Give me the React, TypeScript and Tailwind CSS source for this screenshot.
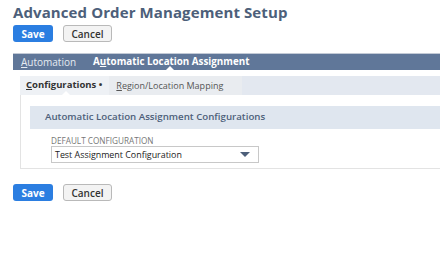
import React from "react";

const font = { fontFamily: '"Open Sans", "Liberation Sans", sans-serif' };

function Buttons() {
  return (
    <div className="flex items-center gap-[10px]">
      <button className="h-[17px] w-[40px] rounded-[3px] bg-[#2b7ee1] text-[10px] font-bold leading-none text-white">
        Save
      </button>
      <button className="h-[17px] w-[49px] rounded-[3px] border border-[#b9b9b9] bg-[#f3f3f3] text-[10px] font-semibold leading-none text-[#333]">
        Cancel
      </button>
    </div>
  );
}

export default function App() {
  return (
    <div className="h-[256px] w-[440px] overflow-hidden bg-white" style={font}>
      <div className="pl-[13px] pt-[1px]">
        <h1 className="text-[15px] font-bold leading-[22px] tracking-[0.1px] text-[#4d5f7a]">
          Advanced Order Management Setup
        </h1>
        <div className="mt-[2px]">
          <Buttons />
        </div>

        <div className="relative mt-[11px] flex h-[17px] items-center border-t border-[#c3cad6] bg-[#607799] pl-[8px] text-[10px] text-white">
          <span className="mr-[17px] text-[#e6ebf2]">
            <span className="underline">A</span>utomation
          </span>
          <span className="text-[9.8px] font-bold">
            A<span className="underline">u</span>tomatic Location Assignment
          </span>
          <span className="absolute bottom-0 left-[153px] h-0 w-0 border-x-[4px] border-b-[4px] border-x-transparent border-b-white" />
        </div>

        <div className="ml-[7px] mt-[6px]">
          <div className="relative flex h-[19px] items-stretch bg-[#e3e8f0] text-[9.5px]">
            <div className="flex items-center bg-[#eef1f5] pl-[6px] pr-[7px] font-bold text-[#333]">
              <span>
                <span className="underline">C</span>onfigurations •
              </span>
            </div>
            <div className="flex items-center bg-[#e9ecf0] pl-[7px] pr-[19px] text-[9px] text-[#555]">
              <span>
                <span className="underline">R</span>egion/Location Mapping
              </span>
            </div>
            <span className="absolute bottom-0 left-[42px] h-0 w-0 border-x-[4px] border-b-[4px] border-x-transparent border-b-white" />
          </div>

          <div className="border-b border-l border-[#e3e3e3] bg-white pb-[5px] pl-[9px] pt-[11px]">
            <div className="flex h-[23px] items-center bg-[#dfe6ef] pl-[15px] text-[9.7px] font-semibold text-[#4d5f7a]">
              Automatic Location Assignment Configurations
            </div>
            <div className="pl-[21px] pt-[6px]">
              <div className="text-[8.2px] leading-[11px] text-[#777]">DEFAULT CONFIGURATION</div>
              <div className="flex h-[17px] w-[208px] items-center justify-between border border-[#c8c8c8] pl-[3px] pr-[8px] text-[8.9px] text-[#222]">
                <span>Test Assignment Configuration</span>
                <span className="h-0 w-0 border-x-[5px] border-t-[5px] border-x-transparent border-t-[#4d5f7a]" />
              </div>
            </div>
          </div>
        </div>

        <div className="mt-[15px]">
          <Buttons />
        </div>
      </div>
    </div>
  );
}
